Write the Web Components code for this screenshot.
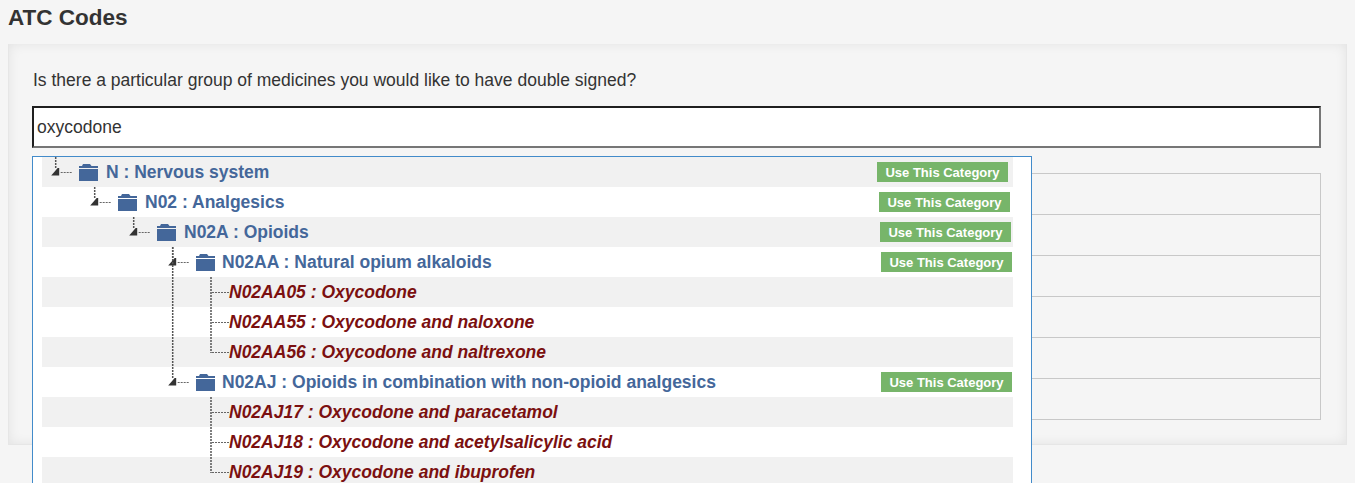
<!DOCTYPE html>
<html>
<head>
<meta charset="utf-8">
<style>
  html, body { margin: 0; height: 483px; overflow: hidden; background: #f5f5f5; }
  body { font-family: "Liberation Sans", Arial, sans-serif; color: #333; }
</style>
</head>
<body>
<atc-page>
  <span slot="title">ATC Codes</span>
  <span slot="question">Is there a particular group of medicines you would like to have double signed?</span>
  <atc-results slot="results">
    <atc-node level="0" kind="folder" shift="5" code="N : Nervous system"></atc-node>
    <atc-node level="1" kind="folder" shift="3" code="N02 : Analgesics"></atc-node>
    <atc-node level="2" kind="folder" shift="2" code="N02A : Opioids"></atc-node>
    <atc-node level="3" kind="folder" shift="1" through code="N02AA : Natural opium alkaloids"></atc-node>
    <atc-node level="4" kind="leaf" through code="N02AA05 : Oxycodone"></atc-node>
    <atc-node level="4" kind="leaf" through code="N02AA55 : Oxycodone and naloxone"></atc-node>
    <atc-node level="4" kind="leaf" through last code="N02AA56 : Oxycodone and naltrexone"></atc-node>
    <atc-node level="3" kind="folder" shift="1" code="N02AJ : Opioids in combination with non-opioid analgesics"></atc-node>
    <atc-node level="4" kind="leaf" code="N02AJ17 : Oxycodone and paracetamol"></atc-node>
    <atc-node level="4" kind="leaf" code="N02AJ18 : Oxycodone and acetylsalicylic acid"></atc-node>
    <atc-node level="4" kind="leaf" last code="N02AJ19 : Oxycodone and ibuprofen"></atc-node>
  </atc-results>
</atc-page>

<script>
class AtcPage extends HTMLElement {
  connectedCallback() {
    this.attachShadow({ mode: 'open' });
    this.shadowRoot.innerHTML = `
      <style>
        :host { display: block; padding: 0 8px; }
        h1 { margin: 0; height: 44px; font-size: 22.5px; line-height: 36px; font-weight: bold; color: #333; }
        .well {
          position: relative;
          box-sizing: border-box;
          height: 401px;
          padding: 26px 25px 0 23px;
          background: #f5f5f5;
          border: 1px solid #e6e6e6;
          border-top: 0;
          box-shadow: inset 0 0 12px rgba(0,0,0,.08);
        }
        p { margin: 0 0 16px; padding-left: 1px; font-size: 17.5px; line-height: 20px; color: #333; }
        .input {
          box-sizing: border-box;
          height: 42px;
          margin-bottom: 25px;
          padding: 0 3px;
          background: #fff;
          border: 2px solid;
          border-color: #1f1f1f #767676 #767676 #1f1f1f;
          font-size: 17.5px;
          line-height: 38px;
          color: #333;
        }
        .grid { border: 1px solid #c8c8c8; border-bottom: 0; }
        .grid div { height: 40px; border-bottom: 1px solid #c8c8c8; }
        .drop { position: absolute; left: 23px; top: 112px; }
      </style>
      <h1><slot name="title"></slot></h1>
      <div class="well">
        <p><slot name="question"></slot></p>
        <div class="input">oxycodone</div>
        <div class="grid"><div></div><div></div><div></div><div></div><div></div><div></div></div>
        <div class="drop"><slot name="results"></slot></div>
      </div>
    `;
  }
}

class AtcResults extends HTMLElement {
  connectedCallback() {
    this.attachShadow({ mode: 'open' });
    this.shadowRoot.innerHTML = `
      <style>
        :host {
          display: block;
          box-sizing: border-box;
          width: 1000px;
          height: 340px;
          padding-left: 9px;
          padding-right: 18px;
          background: #fff;
          border: 1px solid #428bca;
          border-bottom: 0;
          overflow: hidden;
        }
        ::slotted(atc-node:nth-child(odd)) { background: #f1f1f1; }
      </style>
      <slot></slot>
    `;
  }
}

const folderIcon = `
  <svg class="icon" width="19" height="17" viewBox="0 0 19 17">
    <path fill="#44679a" d="M4 0h7l1.5 2H19v2H0V2h3zM0 5h19v12H0z"/>
  </svg>`;

class AtcNode extends HTMLElement {
  connectedCallback() {
    this.attachShadow({ mode: 'open' });
    const level = Number(this.getAttribute('level'));
    const leaf = this.getAttribute('kind') === 'leaf';
    const shift = Number(this.getAttribute('shift') || 0);
    const down = 'stroke="#555" stroke-width="1.5" stroke-dasharray="2 1" fill="none"';
    const across = 'stroke="#666" stroke-width="1" stroke-dasharray="2 1" fill="none"';
    let lines = '';
    if (leaf) {
      lines += `<path ${down} d="M169 0V${this.hasAttribute('last') ? 16 : 30}"/>`;
      lines += `<path ${across} d="M170 15.5H187"/>`;
    } else {
      const x = 13.7 + level * 39;
      lines += `<path ${down} d="M${x} 0V12"/>`;
      lines += `<path ${across} d="M${x + 5} 15.5H${x + 17}"/>`;
      lines += `<path fill="#333" d="M${x - 4.5} 18.5h8v-7.5h-1.5z"/>`;
    }
    // the parent's line carries on past the open children
    if (this.hasAttribute('through')) {
      lines += `<path ${down} d="M130.7 0V30"/>`;
    }
    const svgWidth = leaf ? 187 : 37 + level * 39;
    this.shadowRoot.innerHTML = `
      <style>
        :host {
          display: flex;
          align-items: center;
          height: 30px;
          font-size: 17.5px;
          font-weight: bold;
        }
        .tree { flex: none; }
        .icon { flex: none; margin-right: ${level === 3 ? 7 : 8}px; }
        .code { flex: 1; white-space: nowrap; color: #44679a; }
        .code.leaf { color: #7b1010; font-style: italic; }
        .use {
          flex: none;
          box-sizing: border-box;
          width: 131px;
          height: 20px;
          padding-top: 1px;
          margin-right: ${shift}px;
          background: #77b56a;
          color: #fff;
          font-size: 13px;
          line-height: 19px;
          text-align: center;
        }
      </style>
      <svg class="tree" width="${svgWidth}" height="30">${lines}</svg>
      ${leaf ? '' : folderIcon}
      <span class="code ${leaf ? 'leaf' : ''}">${this.getAttribute('code')}</span>
      ${leaf ? '' : '<span class="use">Use This Category</span>'}
    `;
  }
}

customElements.define('atc-page', AtcPage);
customElements.define('atc-results', AtcResults);
customElements.define('atc-node', AtcNode);
</script>
</body>
</html>
